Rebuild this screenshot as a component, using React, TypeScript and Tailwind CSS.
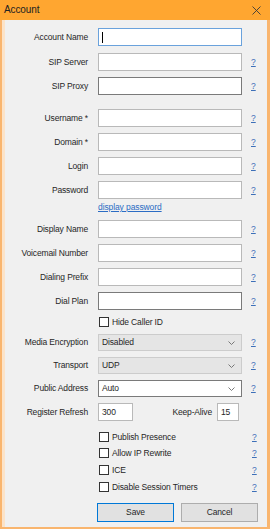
import React from "react";

const font = "font-['Liberation_Sans',Arial,sans-serif]";
const txt = "text-[8.5px] leading-none tracking-[-0.15px] text-[#262626]";

function Help() {
  return (
    <span className="ml-[9px] text-[8.5px] leading-none text-[#3d6fb8] underline">?</span>
  );
}

function Label({ children }: { children: React.ReactNode }) {
  return <div className={"w-[83px] shrink-0 text-right " + txt}>{children}</div>;
}

function TextRow({
  label,
  cls,
  help = true,
  dark = false,
  focused = false,
}: {
  label: string;
  cls: string;
  help?: boolean;
  dark?: boolean;
  focused?: boolean;
}) {
  const border = focused
    ? "border-[#6aa2dc]"
    : dark
    ? "border-[#7a7a7a]"
    : "border-[#b9b9b9]";
  return (
    <div className={"flex h-[18px] items-center " + cls}>
      <Label>{label}</Label>
      <div className={"ml-[10px] flex h-[18px] w-[144px] items-center border bg-white pl-[3px] " + border}>
        {focused && <div className="h-[11px] w-px bg-black" />}
      </div>
      {help && <Help />}
    </div>
  );
}

function Chevron() {
  return (
    <svg width="7" height="4" viewBox="0 0 7 4" className="shrink-0">
      <polyline points="0.5,0.5 3.5,3.5 6.5,0.5" fill="none" stroke="#6b6b6b" strokeWidth="0.9" />
    </svg>
  );
}

function SelectRow({
  label,
  value,
  cls,
  white = false,
}: {
  label: string;
  value: string;
  cls: string;
  white?: boolean;
}) {
  return (
    <div className={"flex h-[17px] items-center " + cls}>
      <Label>{label}</Label>
      <div
        className={
          "ml-[10px] flex h-[17px] w-[144px] items-center justify-between border pl-[3px] pr-[6px] " +
          (white ? "border-[#7a7a7a] bg-white" : "border-[#cccccc] bg-[#e5e5e5]")
        }
      >
        <span className={txt}>{value}</span>
        <Chevron />
      </div>
      <Help />
    </div>
  );
}

function CheckRow({ label, cls, help = true }: { label: string; cls: string; help?: boolean }) {
  return (
    <div className={"flex h-[10px] items-center " + cls}>
      <div className="ml-[94px] h-[10px] w-[10px] shrink-0 border border-[#333] bg-white" />
      <span className={"ml-[3px] w-[140px] " + txt}>{label}</span>
      {help && <span className="text-[8.5px] leading-none text-[#3d6fb8] underline">?</span>}
    </div>
  );
}

export default function App() {
  return (
    <div className={"flex h-[529px] w-[270px] flex-col bg-[#f9b56e] " + font}>
      <div className="flex h-[20px] shrink-0 items-center justify-between bg-[#ffa630] pl-[4px] pr-[9px]">
        <span className="text-[10px] leading-none tracking-[-0.1px] text-[#222]">Account</span>
        <svg width="9" height="9" viewBox="0 0 9 9">
          <line x1="0.5" y1="0.5" x2="8.5" y2="8.5" stroke="#3a3a3a" strokeWidth="0.9" />
          <line x1="8.5" y1="0.5" x2="0.5" y2="8.5" stroke="#3a3a3a" strokeWidth="0.9" />
        </svg>
      </div>
      <div className="mb-[2px] ml-[2px] mr-[3px] flex flex-1 flex-col border-l-[3px] border-[#fce3c8] bg-[#f0f0f0]">
        <TextRow label="Account Name" cls="mt-[8px]" help={false} focused />
        <TextRow label="SIP Server" cls="mt-[7px]" />
        <TextRow label="SIP Proxy" cls="mt-[6px]" dark />
        <TextRow label="Username *" cls="mt-[14px]" />
        <TextRow label="Domain *" cls="mt-[6px]" />
        <TextRow label="Login" cls="mt-[6px]" />
        <TextRow label="Password" cls="mt-[6px]" />
        <div className="mt-[3px] flex h-[10px] items-center">
          <span className="ml-[93px] text-[8.5px] leading-none tracking-[-0.1px] text-[#2b6cc4] underline">
            display password
          </span>
        </div>
        <TextRow label="Display Name" cls="mt-[8px]" />
        <TextRow label="Voicemail Number" cls="mt-[6px]" />
        <TextRow label="Dialing Prefix" cls="mt-[6px]" />
        <TextRow label="Dial Plan" cls="mt-[6px]" dark />
        <CheckRow label="Hide Caller ID" cls="mt-[7px]" help={false} />
        <SelectRow label="Media Encryption" value="Disabled" cls="mt-[7px]" />
        <SelectRow label="Transport" value="UDP" cls="mt-[6px]" />
        <SelectRow label="Public Address" value="Auto" cls="mt-[6px]" white />
        <div className="mt-[6px] flex h-[18px] items-center">
          <Label>Register Refresh</Label>
          <div className={"ml-[10px] flex h-[18px] w-[35px] items-center border border-[#b9b9b9] bg-white pl-[3px] " + txt}>
            300
          </div>
          <span className={"w-[79px] text-right " + txt}>Keep-Alive</span>
          <div className={"ml-[5px] flex h-[18px] w-[22px] items-center border border-[#b9b9b9] bg-white pl-[3px] " + txt}>
            15
          </div>
        </div>
        <CheckRow label="Publish Presence" cls="mt-[11px]" />
        <CheckRow label="Allow IP Rewrite" cls="mt-[6px]" />
        <CheckRow label="ICE" cls="mt-[7px]" />
        <CheckRow label="Disable Session Timers" cls="mt-[7px]" />
        <div className="mt-[11px] flex">
          <div className={"ml-[92px] flex h-[19px] w-[77px] items-center justify-center border border-[#0078d7] bg-[#e1e1e1] " + txt}>
            Save
          </div>
          <div className={"ml-[7px] flex h-[19px] w-[77px] items-center justify-center border border-[#adadad] bg-[#e1e1e1] " + txt}>
            Cancel
          </div>
        </div>
      </div>
    </div>
  );
}
